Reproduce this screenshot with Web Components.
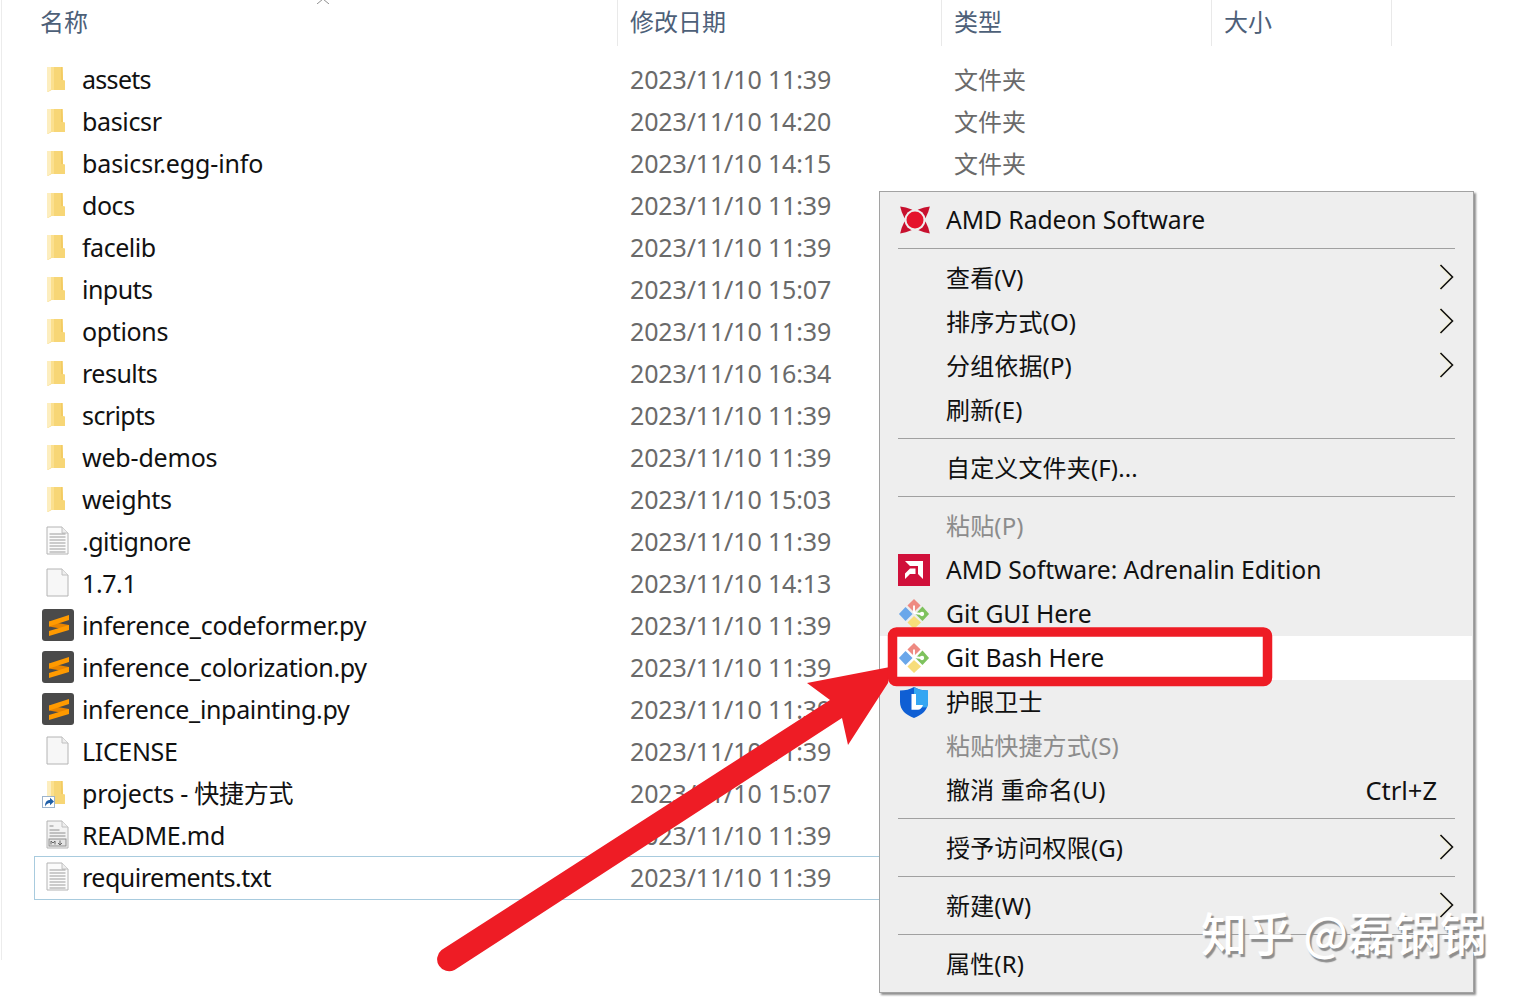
<!DOCTYPE html>
<html lang="zh-CN">
<head>
<meta charset="utf-8">
<title>Explorer context menu</title>
<style>
  html, body { margin: 0; background: #fff; }
  body { font-family: "Noto Sans", "Noto Sans CJK SC", sans-serif; }
</style>
</head>
<body>
<explorer-page>
  <list-header></list-header>
  <file-list>
    <file-row ls="-0.7" icon="folder" name="assets" date="2023/11/10 11:39" type="文件夹"></file-row>
    <file-row ls="-0.35" icon="folder" name="basicsr" date="2023/11/10 14:20" type="文件夹"></file-row>
    <file-row ls="-0.13" icon="folder" name="basicsr.egg-info" date="2023/11/10 14:15" type="文件夹"></file-row>
    <file-row ls="-0.45" icon="folder" name="docs" date="2023/11/10 11:39"></file-row>
    <file-row ls="-0.5" icon="folder" name="facelib" date="2023/11/10 11:39"></file-row>
    <file-row ls="-0.55" icon="folder" name="inputs" date="2023/11/10 15:07"></file-row>
    <file-row ls="-0.35" icon="folder" name="options" date="2023/11/10 11:39"></file-row>
    <file-row ls="-0.5" icon="folder" name="results" date="2023/11/10 16:34"></file-row>
    <file-row ls="-0.6" icon="folder" name="scripts" date="2023/11/10 11:39"></file-row>
    <file-row ls="-0.2" icon="folder" name="web-demos" date="2023/11/10 11:39"></file-row>
    <file-row ls="-0.35" icon="folder" name="weights" date="2023/11/10 15:03"></file-row>
    <file-row ls="-0.5" icon="lines" name=".gitignore" date="2023/11/10 11:39"></file-row>
    <file-row ls="-0.4" icon="blank" name="1.7.1" date="2023/11/10 14:13"></file-row>
    <file-row ls="-0.25" icon="sublime" name="inference_codeformer.py" date="2023/11/10 11:39"></file-row>
    <file-row ls="-0.32" icon="sublime" name="inference_colorization.py" date="2023/11/10 11:39"></file-row>
    <file-row ls="-0.33" icon="sublime" name="inference_inpainting.py" date="2023/11/10 11:39"></file-row>
    <file-row ls="-0.35" icon="blank" name="LICENSE" date="2023/11/10 11:39"></file-row>
    <file-row ls="-0.25" icon="shortcut" name="projects - 快捷方式" date="2023/11/10 15:07"></file-row>
    <file-row ls="-0.3" icon="md" name="README.md" date="2023/11/10 11:39"></file-row>
    <file-row ls="-0.5" icon="lines" name="requirements.txt" date="2023/11/10 11:39" selected></file-row>
  </file-list>
  <context-menu>
    <menu-item icon="radeon" latin>AMD Radeon Software</menu-item>
    <menu-sep></menu-sep>
    <menu-item arrow>查看(V)</menu-item>
    <menu-item arrow>排序方式(O)</menu-item>
    <menu-item arrow>分组依据(P)</menu-item>
    <menu-item>刷新(E)</menu-item>
    <menu-sep></menu-sep>
    <menu-item>自定义文件夹(F)...</menu-item>
    <menu-sep></menu-sep>
    <menu-item disabled>粘贴(P)</menu-item>
    <menu-item icon="amd" latin>AMD Software: Adrenalin Edition</menu-item>
    <menu-item icon="git" latin>Git GUI Here</menu-item>
    <menu-item icon="git" latin active>Git Bash Here</menu-item>
    <menu-item icon="shield">护眼卫士</menu-item>
    <menu-item disabled>粘贴快捷方式(S)</menu-item>
    <menu-item shortcut="Ctrl+Z">撤消 重命名(U)</menu-item>
    <menu-sep></menu-sep>
    <menu-item arrow>授予访问权限(G)</menu-item>
    <menu-sep></menu-sep>
    <menu-item arrow>新建(W)</menu-item>
    <menu-sep></menu-sep>
    <menu-item>属性(R)</menu-item>
  </context-menu>
  <red-annotation></red-annotation>
  <zhihu-mark>知乎 @磊锅锅</zhihu-mark>
</explorer-page>

<script>
const FONT = '"Noto Sans", "Noto Sans CJK SC", sans-serif';
const CJK = '"Noto Sans CJK SC", "Noto Sans", sans-serif';

const FOLDER = `
  <path d="M5 3 H20.5 L21 16 L23 16.5 V26 H9.5 L6 28 L5 27 Z" fill="#f7d676"/>
  <path d="M5 3 H9 V25.5 L6 28 L5 27 Z" fill="#fdeebf"/>
  <path d="M9 3 H12 V26 H9 Z" fill="#fbe08f"/>
  <path d="M19 3 H20.5 L21 16 H19 Z" fill="#f3cb62"/>`;

const DOC = (inner, fill = '#fbfbfb') => `<g transform="translate(-1.5 -1.5)">
  <path d="M6.5 2.5 H21.5 L27.5 8.5 V29.5 H6.5 Z" fill="${fill}" stroke="#b4b4b4"/>
  <path d="M21.5 2.5 V8.5 H27.5" fill="#eee" stroke="#c0c0c0"/>${inner}</g>`;

const LINE_ROWS = [9, 12, 15, 18, 21, 24, 27]
  .map(y => `<path d="M9 ${y}.5 H25" stroke="#9b9b9b"/>`).join('');

const ICONS = {
  folder: `<svg viewBox="0 0 32 32" width="32" height="32">${FOLDER}</svg>`,
  blank: `<svg viewBox="0 0 32 32" width="32" height="32">${DOC('', '#f7f7f7')}</svg>`,
  lines: `<svg viewBox="0 0 32 32" width="32" height="32">${DOC(LINE_ROWS)}</svg>`,
  md: `<svg viewBox="0 0 32 32" width="32" height="32">${DOC(`
      <path d="M9 7.5 H13 M9 11.5 H19 M9 14.5 H25 M9 17.5 H25" stroke="#8e8e8e"/>
      <rect x="8.5" y="20.5" width="17" height="7" fill="#e4e4e4" stroke="#8e8e8e"/>
      <path d="M10.5 26 V22.5 L12.5 24.5 L14.5 22.5 V26 M19.5 22 V26 M17.5 24.5 L19.5 26.5 L21.5 24.5" fill="none" stroke="#666"/>`, '#f3f3f3')}</svg>`,
  sublime: `<svg viewBox="0 0 32 32" width="32" height="32" style="position:relative;top:-1px">
      <rect width="32" height="32" rx="3" fill="#4a4a4a"/>
      <path d="M7 12.6 L27 16 V21 L7 17.6 Z" fill="#e88400"/>
      <path d="M7 12.6 L27 6 V11 L7 17.6 Z" fill="#ff9a00"/>
      <path d="M7 21.9 L27 16 V21 L7 26.9 Z" fill="#ff9a00"/>
    </svg>`,
  shortcut: `<svg viewBox="0 0 32 32" width="32" height="32">${FOLDER}
      <rect x="0.5" y="18.5" width="12" height="11" fill="#fff" stroke="#9db4cc"/>
      <path d="M3 28.5 C3 24 5 22 8 22 V19.8 L12 23.5 L8 27.2 V25 C5.8 25 4.2 26.3 3 28.5 Z" fill="#1f5fa8"/>
    </svg>`,
  radeon: `<svg viewBox="-17 -17 34 34" width="34" height="34">
      <path d="M-20 0 Q0 -14 20 0 Q0 14 -20 0 Z" fill="#c8102e" transform="rotate(42)"/>
      <path d="M-20 0 Q0 -14 20 0 Q0 14 -20 0 Z" fill="#c8102e" transform="rotate(-42)"/>
      <circle r="10.5" fill="#eeeeee"/>
      <circle r="8.5" fill="#e5132c"/>
    </svg>`,
  amd: `<svg viewBox="0 0 32 32" width="32" height="32">
      <rect width="32" height="32" fill="#d0103a"/>
      <path d="M7 7 H25 V25 L20 20 V12 H12 Z" fill="#fff"/>
      <path d="M12 14.5 H17.5 V20 H12 L7 25 V19.5 Z" fill="#fff"/>
    </svg>`,
  git: `<svg viewBox="0 0 34 34" width="32" height="32">
      <path d="M17 1 L24 8 L17 15 L10 8 Z" fill="#ee8a82"/>
      <path d="M26 9 L33 17 L26 24.5 L18.5 17 Z" fill="#7ec25e"/>
      <path d="M17 19 L24.5 26 L17 33 L10 26 Z" fill="#f7dd7a"/>
      <path d="M8 9.5 L15.5 17 L8 24.5 L1 17 Z" fill="#6aa7ea"/>
      <path d="M17 8 V16 M17 16 L25 17" stroke="#fff" stroke-width="2" fill="none"/>
      <circle cx="25.5" cy="17" r="2.3" fill="#fff"/>
    </svg>`,
  shield: `<svg viewBox="0 0 32 34" width="32" height="34">
      <path d="M16 2 C20 4.5 24.5 5.5 30 5.5 V17 C30 25 24 30 16 33 C8 30 2 25 2 17 V5.5 C7.5 5.5 12 4.5 16 2 Z" fill="#0f5fd4"/>
      <path d="M16 2 C20 4.5 24.5 5.5 30 5.5 V17 C30 19 29.6 21 29 22.5 L16 22 Z" fill="#35a6f2"/>
      <path d="M13.5 9 H18 V20 H25 C24 23 22 24.8 20 24.8 H13.5 Z" fill="#fff"/>
    </svg>`
};

function define(name, css, html) {
  customElements.define(name, class extends HTMLElement {
    constructor() {
      super();
      this.attachShadow({ mode: 'open' });
    }
    connectedCallback() {
      const body = typeof html === 'function' ? html(this) : html;
      this.shadowRoot.innerHTML = `<style>${css}</style>${body}`;
    }
  });
}

define('explorer-page', `
  :host { display: block; position: relative; width: 1526px; height: 999px; overflow: hidden;
          background: #fff; font-family: ${FONT}; }
  .edge { position: absolute; left: 1px; top: 0; width: 1px; height: 960px; background: #ececec; }
`, `<div class="edge"></div><slot></slot>`);

define('list-header', `
  :host { display: grid; grid-template-columns: 618px 324px 270px 180px; height: 46px;
          font: 24px/42px ${CJK}; color: #4d6078; position: relative; }
  div { padding-left: 12px; border-right: 1px solid #e9e9e9; box-sizing: border-box; height: 46px; }
  div.first { padding-left: 40px; }
  svg { position: absolute; left: 316px; top: -1px; }
`, `<div class="first">名称</div><div>修改日期</div><div>类型</div><div>大小</div>
    <svg width="14" height="5" viewBox="0 0 14 5"><path d="M1 5 L7 0 L13 5" fill="none" stroke="#8f8f8f"/></svg>`);

define('file-list', `:host { display: flex; flex-direction: column; padding: 13px 0 0 34px; }`, `<slot></slot>`);

define('file-row', `
  :host { display: grid; grid-template-columns: 48px 548px 324px 1fr; align-items: center;
          width: 846px; height: 42px; box-sizing: border-box; position: relative;
          font-family: ${FONT}; font-size: 25px; line-height: 30px; }
  :host([selected])::before { content: ""; position: absolute; left: 0; right: 0; top: -1px; bottom: -1px;
          border: 1px solid #a8cbde; }
  .ic { display: flex; align-items: center; justify-content: center; width: 32px; height: 32px; margin-left: 8px; }
  .name { color: #111; white-space: nowrap; padding-bottom: 2px; }
  .date { color: #6a6a6a; white-space: nowrap; padding-bottom: 2px; letter-spacing: -0.14px; }
  .type { color: #6a6a6a; font-family: ${CJK}; font-size: 24px; white-space: nowrap; padding-bottom: 2px; }
`, h => `
  <span class="ic">${ICONS[h.getAttribute('icon')]}</span>
  <span class="name" style="letter-spacing:${h.getAttribute('ls') || 0}px">${h.getAttribute('name')}</span>
  <span class="date">${h.getAttribute('date')}</span>
  <span class="type">${h.getAttribute('type') || ''}</span>`);

define('context-menu', `
  :host { position: absolute; left: 879px; top: 191px; width: 595px; height: 802px; box-sizing: border-box;
          border: 1px solid #a2a2a2; background: #eeeeee; padding: 6px 0;
          box-shadow: 2px 2px 2px #8f8f8f; display: flex; flex-direction: column; }
`, `<slot></slot>`);

define('menu-item', `
  :host { display: flex; align-items: center; height: 44px; flex: none; padding: 0 19px 0 66px; box-sizing: border-box;
          position: relative; font-family: ${FONT}; font-size: 24px; letter-spacing: 0.15px; line-height: 30px;
          color: #111; white-space: nowrap; }
  :host([latin]) { font-size: 24.7px; letter-spacing: -0.06px; }
  :host([disabled]) { color: #8c8c8c; }
  :host([active]) { background: #fff; margin-right: 1px; }
  .ic { position: absolute; left: 18px; top: 50%; transform: translateY(-50%); display: flex; }
  .label { flex: 1; }
  .sc { padding-right: 17px; font-size: 25.5px; letter-spacing: 0; }
  svg.ch { display: block; margin-bottom: 2px; }
`, h => {
  const ic = h.getAttribute('icon');
  const sc = h.getAttribute('shortcut');
  return `${ic ? `<span class="ic">${ICONS[ic]}</span>` : ''}
    <span class="label"><slot></slot></span>
    ${sc ? `<span class="sc">${sc}</span>` : ''}
    ${h.hasAttribute('arrow') ? `<svg class="ch" width="15" height="28" viewBox="0 0 15 28">
        <path d="M1.5 2 L13.5 14 L1.5 26" fill="none" stroke="#f4f1dc" stroke-width="3" transform="translate(-1 0)"/>
        <path d="M1.5 2 L13.5 14 L1.5 26" fill="none" stroke="#111" stroke-width="1.6"/></svg>` : ''}`;
});

define('menu-sep', `
  :host { display: block; height: 14px; flex: none; position: relative; }
  div { position: absolute; left: 18px; right: 18px; top: 6px; height: 1px; background: #a0a0a0; }
`, `<div></div>`);

define('red-annotation', `
  :host { position: absolute; inset: 0; pointer-events: none; display: block; }
  svg { position: absolute; left: 0; top: 0; }
`, `<svg width="1526" height="999" viewBox="0 0 1526 999">
    <path d="M441.5 950 L830 700 L807 683 L890 667 L888 683 L848 745 L842 718 L454.5 970 A12 12 0 0 1 441.5 950 Z" fill="#ee1c25"/>
    <rect x="892.5" y="632" width="375" height="49.5" rx="4" fill="none" stroke="#ee1c25" stroke-width="9.5"/>
  </svg>`);

define('zhihu-mark', `
  :host { position: absolute; left: 1201px; top: 899px; font: 500 46px/64px ${CJK}; color: #fff; white-space: nowrap;
          text-shadow: 2px 3px 1px #8e8e8e; }
`, `<slot></slot>`);
</script>
</body>
</html>
